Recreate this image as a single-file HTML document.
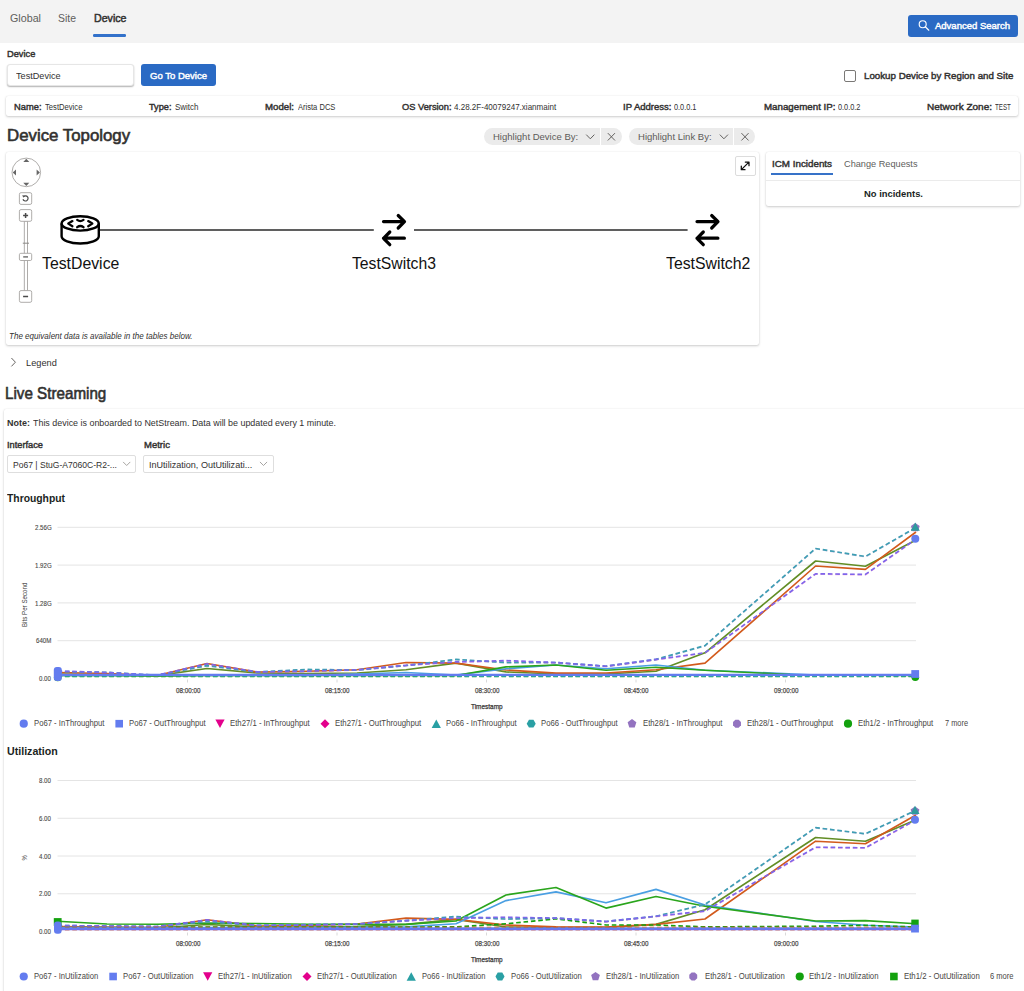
<!DOCTYPE html>
<html lang="en"><head><meta charset="utf-8"><title>Device</title>
<style>
html,body{margin:0;padding:0;background:#fff;}
body{width:1024px;height:991px;position:relative;overflow:hidden;font-family:"Liberation Sans",sans-serif;color:#323130;}
.t{position:absolute;white-space:nowrap;transform-origin:0 50%;}
.r{position:absolute;box-sizing:border-box;}
svg{position:absolute;overflow:visible;}
svg text{font-family:"Liberation Sans",sans-serif;}
</style></head><body>
<div class="r" style="left:0px;top:0px;width:1024px;height:42.7px;background:#f3f3f3;"></div>
<div class="t" style="left:9.70px;top:11.00px;font-size:11px;line-height:15px;color:#605e5c;transform:scaleX(0.9749);">Global</div>
<div class="t" style="left:58.30px;top:11.00px;font-size:11px;line-height:15px;color:#605e5c;transform:scaleX(0.9496);">Site</div>
<div class="t" style="left:93.70px;top:11.00px;font-size:11px;line-height:15px;color:#323130;transform:scaleX(0.9666);-webkit-text-stroke:0.49px #323130;">Device</div>
<div class="r" style="left:93.2px;top:34.2px;width:33.2px;height:2.4px;background:#3271ca;border-radius:1.2px;"></div>
<div class="r" style="left:908px;top:14.6px;width:110.3px;height:22px;background:#2a6ac4;border-radius:3px;"></div>
<svg style="left:0;top:0" width="1024" height="44" viewBox="0 0 1024 44"><circle cx="922.7" cy="24.2" r="3.5" fill="none" stroke="#fff" stroke-width="1.15"/><path d="M925.3 26.8 L928.8 30.2" stroke="#fff" stroke-width="1.2" stroke-linecap="round"/></svg>
<div class="t" style="left:934.50px;top:19.00px;font-size:9.5px;line-height:13px;color:#fff;transform:scaleX(1.0001);-webkit-text-stroke:0.43px #fff;">Advanced Search</div>
<div class="t" style="left:6.70px;top:47.00px;font-size:9.5px;line-height:13px;color:#323130;transform:scaleX(0.9746);-webkit-text-stroke:0.43px #323130;">Device</div>
<div class="r" style="left:6.5px;top:64.3px;width:127px;height:21.6px;background:#fff;border:1px solid #e6e6e6;border-radius:3px;box-shadow:0 1px 1.5px rgba(0,0,0,.3);"></div>
<div class="t" style="left:15.60px;top:69.00px;font-size:9.5px;line-height:13px;color:#323130;transform:scaleX(0.9599);">TestDevice</div>
<div class="r" style="left:141.2px;top:64.4px;width:74.8px;height:21.6px;background:#2a6ac4;border-radius:3px;"></div>
<div class="t" style="left:150.00px;top:69.00px;font-size:9.5px;line-height:13px;color:#fff;transform:scaleX(1.0026);-webkit-text-stroke:0.43px #fff;">Go To Device</div>
<div class="r" style="left:844px;top:70px;width:12px;height:11.8px;background:#fff;border:1px solid #7a7876;border-radius:2px;"></div>
<div class="t" style="left:863.60px;top:69.00px;font-size:9.8px;line-height:14px;color:#323130;transform:scaleX(0.9936);-webkit-text-stroke:0.44px #323130;">Lookup Device by Region and Site</div>
<div class="r" style="left:6px;top:96.2px;width:1012.2px;height:19.5px;background:#fff;border-radius:2px;box-shadow:0 1px 2.5px rgba(0,0,0,.2),0 0 1px rgba(0,0,0,.12);"></div>
<div class="t" style="left:13.70px;top:100.00px;font-size:9.5px;line-height:13px;color:#323130;transform:scaleX(0.9828);-webkit-text-stroke:0.43px #323130;">Name:</div>
<div class="t" style="left:45.00px;top:101.00px;font-size:8.4px;line-height:12px;color:#323130;transform:scaleX(0.9128);">TestDevice</div>
<div class="t" style="left:149.20px;top:100.00px;font-size:9.5px;line-height:13px;color:#323130;transform:scaleX(0.9683);-webkit-text-stroke:0.43px #323130;">Type:</div>
<div class="t" style="left:174.50px;top:101.00px;font-size:8.4px;line-height:12px;color:#323130;transform:scaleX(0.9498);">Switch</div>
<div class="t" style="left:264.50px;top:100.00px;font-size:9.5px;line-height:13px;color:#323130;transform:scaleX(1.0170);-webkit-text-stroke:0.43px #323130;">Model:</div>
<div class="t" style="left:298.00px;top:101.00px;font-size:8.4px;line-height:12px;color:#323130;transform:scaleX(0.9027);">Arista DCS</div>
<div class="t" style="left:401.50px;top:100.00px;font-size:9.5px;line-height:13px;color:#323130;transform:scaleX(0.9765);-webkit-text-stroke:0.43px #323130;">OS Version:</div>
<div class="t" style="left:454.00px;top:101.00px;font-size:8.4px;line-height:12px;color:#323130;transform:scaleX(0.9585);">4.28.2F-40079247.xianmaint</div>
<div class="t" style="left:622.50px;top:100.00px;font-size:9.5px;line-height:13px;color:#323130;transform:scaleX(1.0018);-webkit-text-stroke:0.43px #323130;">IP Address:</div>
<div class="t" style="left:674.00px;top:101.00px;font-size:8.4px;line-height:12px;color:#323130;transform:scaleX(0.8759);">0.0.0.1</div>
<div class="t" style="left:763.50px;top:100.00px;font-size:9.5px;line-height:13px;color:#323130;transform:scaleX(1.0257);-webkit-text-stroke:0.43px #323130;">Management IP:</div>
<div class="t" style="left:838.00px;top:101.00px;font-size:8.4px;line-height:12px;color:#323130;transform:scaleX(0.8759);">0.0.0.2</div>
<div class="t" style="left:927.00px;top:100.00px;font-size:9.5px;line-height:13px;color:#323130;transform:scaleX(1.0522);-webkit-text-stroke:0.43px #323130;">Network Zone:</div>
<div class="t" style="left:995.10px;top:101.00px;font-size:8.4px;line-height:12px;color:#323130;transform:scaleX(0.7406);">TEST</div>
<div class="t" style="left:7.00px;top:124.00px;font-size:16.4px;line-height:23px;color:#323130;transform:scaleX(1.0263);-webkit-text-stroke:0.60px #323130;">Device Topology</div>
<div class="r" style="left:484px;top:128.2px;width:115.79999999999998px;height:16.8px;background:#ebebeb;border-radius:8.4px 0 0 8.4px;"></div>
<div class="r" style="left:601.1999999999999px;top:128.2px;width:20.400000000000045px;height:16.8px;background:#ebebeb;border-radius:0 8.4px 8.4px 0;"></div>
<div class="t" style="left:492.60px;top:130.00px;font-size:9.8px;line-height:14px;color:#5d5b59;transform:scaleX(0.9716);">Highlight Device By:</div>
<svg style="left:0;top:0" width="1024" height="150" viewBox="0 0 1024 150"><g fill="none" stroke="#5d5b59" stroke-width="0.95" stroke-linecap="round" stroke-linejoin="round"><path d="M586.5 134.9l3.8 3.9l3.8-3.9"/><path d="M608.1 133.4l6.6 6.8M614.7 133.4l-6.6 6.8"/></g></svg>
<div class="r" style="left:629.1px;top:128.2px;width:103.69999999999996px;height:16.8px;background:#ebebeb;border-radius:8.4px 0 0 8.4px;"></div>
<div class="r" style="left:734.1999999999999px;top:128.2px;width:20.500000000000068px;height:16.8px;background:#ebebeb;border-radius:0 8.4px 8.4px 0;"></div>
<div class="t" style="left:637.50px;top:130.00px;font-size:9.8px;line-height:14px;color:#5d5b59;transform:scaleX(0.9720);">Highlight Link By:</div>
<svg style="left:0;top:0" width="1024" height="150" viewBox="0 0 1024 150"><g fill="none" stroke="#5d5b59" stroke-width="0.95" stroke-linecap="round" stroke-linejoin="round"><path d="M720.1 134.9l3.8 3.9l3.8-3.9"/><path d="M741.7 133.4l6.6 6.8M748.3000000000001 133.4l-6.6 6.8"/></g></svg>
<div class="r" style="left:6.2px;top:151.6px;width:753px;height:193.3px;background:#fff;border-radius:2px;box-shadow:0 1px 2.5px rgba(0,0,0,.2),0 0 1px rgba(0,0,0,.12);"></div>
<div class="r" style="left:734.8px;top:155.6px;width:20.8px;height:20.7px;background:#fff;border:1px solid #dcdcdc;border-radius:2px;"></div>
<svg style="left:0;top:0" width="1024" height="200" viewBox="0 0 1024 200"><g fill="none" stroke="#111" stroke-width="1.25" stroke-linecap="round" stroke-linejoin="round"><path d="M741.4 169.6L748.9 162.1M745.3 162H749V165.7M741.3 166V169.7H745"/></g></svg>
<div class="r" style="left:766px;top:151.6px;width:253.5px;height:54.2px;background:#fff;border-radius:2px;box-shadow:0 1px 2.5px rgba(0,0,0,.2),0 0 1px rgba(0,0,0,.12);"></div>
<div class="t" style="left:772.20px;top:157.00px;font-size:9.8px;line-height:14px;color:#323130;transform:scaleX(1.0015);-webkit-text-stroke:0.44px #323130;">ICM Incidents</div>
<div class="t" style="left:844.00px;top:157.00px;font-size:9.8px;line-height:14px;color:#605e5c;transform:scaleX(0.9369);">Change Requests</div>
<div class="r" style="left:771px;top:173.2px;width:62px;height:1.6px;background:#3672c8;"></div>
<div class="r" style="left:766px;top:179.8px;width:253.5px;height:0.8px;background:#ebebeb;"></div>
<div class="t" style="left:863.50px;top:187.00px;font-size:9.8px;line-height:14px;color:#201f1e;transform:scaleX(0.9589);font-weight:700;">No incidents.</div>
<svg style="left:0;top:0" width="60" height="320" viewBox="0 0 60 320"><circle cx="26.3" cy="172.4" r="14.3" fill="#fff" stroke="#a6a4a2" stroke-width="0.9"/><g fill="#666"><path d="M26.3 158.7l3 3.4h-6z"/><path d="M26.3 186.1l3-3.4h-6z"/><path d="M12.7 172.4l3.3-3v6z"/><path d="M39.9 172.4l-3.3-3v6z"/></g><g fill="#fff" stroke="#a6a4a2" stroke-width="0.9"><rect x="24.3" y="221" width="3.2" height="70"/><rect x="19.4" y="192.7" width="12.3" height="11.7" rx="1.6"/><rect x="19.4" y="209.6" width="12.3" height="11.7" rx="1.6"/><rect x="19.4" y="290.6" width="12.3" height="11.7" rx="1.6"/><rect x="19.4" y="253.3" width="12.3" height="7.2" rx="1.4"/></g><g stroke="#4a4a4a" stroke-width="1.5" fill="none"><path d="M22.8 243.2h6.2" stroke="#8a8886" stroke-width="1"/><path d="M23.1 215.5h5M25.6 213v5"/><path d="M23.1 296.5h5"/><path d="M23.2 256.9h4.8" stroke="#6a6a6a" stroke-width="1.4"/><path d="M23.6 196.6a2.6 2.6 0 1 1 -0.6 2.6" stroke-width="1.2"/></g><path d="M22.2 195.3l2.6 0.2l-1.4 2.2z" fill="#555"/></svg>
<svg style="left:0;top:0" width="1024" height="400" viewBox="0 0 1024 400"><g fill="none" stroke="#2b2b2b" stroke-width="1.7"><path d="M99.6 230H373.8M414 230H687.6"/></g><g fill="none" stroke="#000" stroke-width="3.2" stroke-linecap="round" stroke-linejoin="round"><path d="M383.5 221.6H404.4M398.2 215.5L404.5 221.7L398.2 228M404.4 238.2H383.5M389.8 232L383.5 238.3L389.8 244.7"/><path d="M697.0 221.6H717.9M711.7 215.5L718.0 221.7L711.7 228M717.9 238.2H697.0M703.3 232L697.0 238.3L703.3 244.7"/></g><g fill="none" stroke="#000" stroke-width="2.4" stroke-linejoin="round"><ellipse cx="80.2" cy="223.4" rx="18.6" ry="7.2"/><path d="M61.6 223.4V236.3A18.6 7.2 0 0 0 98.8 236.3V223.4"/></g><g fill="none" stroke="#000" stroke-width="2.3" stroke-linecap="round" stroke-linejoin="round"><path d="M72.4 221.1L68.3 223.6L72.4 226.2M88.2 221.1L92.3 223.6L88.2 226.2M77.2 219.9Q80.3 222.3 83.5 219.9M77.2 227.2Q80.3 224.8 83.5 227.2"/></g></svg>
<div class="t" style="left:41.90px;top:253.00px;font-size:15.7px;line-height:22px;color:#111;transform:scaleX(1.0080);">TestDevice</div>
<div class="t" style="left:352.20px;top:253.00px;font-size:15.7px;line-height:22px;color:#111;transform:scaleX(1.0028);">TestSwitch3</div>
<div class="t" style="left:665.60px;top:253.00px;font-size:15.7px;line-height:22px;color:#111;transform:scaleX(1.0075);">TestSwitch2</div>
<div class="t" style="left:9.40px;top:330.00px;font-size:8.5px;line-height:12px;color:#323130;transform:scaleX(0.9476);font-style:italic;">The equivalent data is available in the tables below.</div>
<div class="t" style="left:26.00px;top:356.00px;font-size:9.6px;line-height:13px;color:#323130;transform:scaleX(0.9614);">Legend</div>
<svg style="left:0;top:0" width="40" height="400" viewBox="0 0 40 400"><path d="M11.7 358.3l3.7 3.9l-3.7 3.9" fill="none" stroke="#5d5b59" stroke-width="0.95" stroke-linecap="round" stroke-linejoin="round"/></svg>
<div class="t" style="left:5.10px;top:382.00px;font-size:16.5px;line-height:23px;color:#323130;transform:scaleX(0.9204);-webkit-text-stroke:0.60px #323130;">Live Streaming</div>
<div class="r" style="left:3.8px;top:408.6px;width:1030px;height:600px;background:#fff;border-radius:2px;box-shadow:0 1px 2.5px rgba(0,0,0,.2),0 0 1px rgba(0,0,0,.12);"></div>
<div class="t" style="left:6.80px;top:416.00px;font-size:9.5px;line-height:13px;color:#323130;transform:scaleX(0.9433);font-weight:700;">Note:</div>
<div class="t" style="left:32.80px;top:416.00px;font-size:9.5px;line-height:13px;color:#323130;transform:scaleX(0.9376);">This device is onboarded to NetStream. Data will be updated every 1 minute.</div>
<div class="t" style="left:6.80px;top:438.00px;font-size:9.6px;line-height:13px;color:#323130;transform:scaleX(0.9637);-webkit-text-stroke:0.43px #323130;">Interface</div>
<div class="t" style="left:143.70px;top:438.00px;font-size:9.6px;line-height:13px;color:#323130;transform:scaleX(0.9911);-webkit-text-stroke:0.43px #323130;">Metric</div>
<div class="r" style="left:6.7px;top:454.8px;width:129.6px;height:18.6px;background:#fff;border:1px solid #dedede;border-radius:2px;"></div>
<div class="r" style="left:143.3px;top:454.8px;width:130.3px;height:18.6px;background:#fff;border:1px solid #dedede;border-radius:2px;"></div>
<div class="t" style="left:12.70px;top:458.00px;font-size:9.7px;line-height:14px;color:#323130;transform:scaleX(0.8830);">Po67 | StuG-A7060C-R2-...</div>
<div class="t" style="left:149.10px;top:458.00px;font-size:9.7px;line-height:14px;color:#323130;transform:scaleX(0.9357);">InUtilization, OutUtilizati...</div>
<svg style="left:0;top:0" width="300" height="480" viewBox="0 0 300 480"><g fill="none" stroke="#a19f9d" stroke-width="0.95" stroke-linecap="round" stroke-linejoin="round"><path d="M123.4 462.2l3.3 3.3l3.3-3.3M260.2 462.2l3.3 3.3l3.3-3.3"/></g></svg>
<div class="t" style="left:7.40px;top:491.00px;font-size:11px;line-height:15px;color:#201f1e;transform:scaleX(0.9400);font-weight:700;">Throughput</div>
<div class="t" style="left:7.00px;top:744.00px;font-size:11px;line-height:15px;color:#201f1e;transform:scaleX(0.9667);font-weight:700;">Utilization</div>
<svg style="left:0;top:0" width="1024" height="991" viewBox="0 0 1024 991">
<line x1="57.5" x2="916" y1="527.30" y2="527.30" stroke="#e4e4e4" stroke-width="1"/>
<line x1="57.5" x2="916" y1="565.10" y2="565.10" stroke="#e4e4e4" stroke-width="1"/>
<line x1="57.5" x2="916" y1="602.90" y2="602.90" stroke="#e4e4e4" stroke-width="1"/>
<line x1="57.5" x2="916" y1="640.70" y2="640.70" stroke="#e4e4e4" stroke-width="1"/>
<line x1="187.5" x2="187.5" y1="679.5" y2="682.5" stroke="#d0d0d0" stroke-width="0.8"/>
<line x1="337" x2="337" y1="679.5" y2="682.5" stroke="#d0d0d0" stroke-width="0.8"/>
<line x1="486.5" x2="486.5" y1="679.5" y2="682.5" stroke="#d0d0d0" stroke-width="0.8"/>
<line x1="636" x2="636" y1="679.5" y2="682.5" stroke="#d0d0d0" stroke-width="0.8"/>
<line x1="785.5" x2="785.5" y1="679.5" y2="682.5" stroke="#d0d0d0" stroke-width="0.8"/>
<polyline points="57.5,676.5 107.0,676.5 157.0,676.5 207.0,676.5 257.0,676.5 307.0,676.5 357.0,676.5 406.0,676.5 456.0,676.5 506.0,676.5 556.0,676.5 606.0,676.5 656.0,676.5 705.0,676.5 815.6,676.5 865.4,676.5 916.0,676.5" fill="none" stroke="#1e9a2a" stroke-width="1.3" stroke-linejoin="round" stroke-dasharray="4.6 2.8"/>
<polyline points="57.5,676.2 107.0,676.2 157.0,676.2 207.0,676.2 257.0,676.2 307.0,676.2 357.0,676.2 406.0,676.2 456.0,676.2 506.0,676.2 556.0,676.2 606.0,676.2 656.0,676.2 705.0,676.2 815.6,676.2 865.4,676.2 916.0,676.2" fill="none" stroke="#2aa0a4" stroke-width="1.4" stroke-linejoin="round" stroke-dasharray="4.6 2.8"/>
<polyline points="57.5,671.4 107.0,672.9 157.0,675.6 207.0,664.1 257.0,672.2 307.0,671.6 357.0,670.1 406.0,665.6 456.0,662.2 506.0,661.0 556.0,662.9 606.0,666.6 656.0,659.8 705.0,653.1 815.6,574.1 865.4,574.8 916.0,539.4" fill="none" stroke="#e3008c" stroke-width="1.65" stroke-linejoin="round" stroke-dasharray="4.6 2.8" opacity="0.3"/>
<polyline points="57.5,674.0 107.0,674.5 157.0,675.6 207.0,668.5 257.0,673.0 307.0,673.5 357.0,673.0 406.0,669.8 456.0,663.1 506.0,671.9 556.0,674.0 606.0,674.0 656.0,671.2 705.0,652.8 815.6,561.0 865.4,566.2 916.0,540.0" fill="none" stroke="#628d25" stroke-width="1.65" stroke-linejoin="round"/>
<polyline points="57.5,672.5 107.0,673.5 157.0,675.5 207.0,663.5 257.0,672.0 307.0,671.2 357.0,669.8 406.0,662.5 456.0,663.1 506.0,670.0 556.0,673.1 606.0,673.0 656.0,669.8 705.0,663.1 815.6,566.0 865.4,569.4 916.0,532.0" fill="none" stroke="#d25a1c" stroke-width="1.65" stroke-linejoin="round"/>
<polyline points="57.5,675.5 107.0,675.5 157.0,676.0 207.0,675.5 257.0,675.5 307.0,675.5 357.0,674.0 406.0,672.5 456.0,675.0 506.0,668.8 556.0,665.0 606.0,668.8 656.0,665.0 705.0,670.2 815.6,675.0 865.4,675.0 916.0,675.0" fill="none" stroke="#4a9fe2" stroke-width="1.65" stroke-linejoin="round"/>
<polyline points="57.5,675.5 107.0,675.5 157.0,675.8 207.0,675.5 257.0,675.5 307.0,675.5 357.0,675.5 406.0,675.5 456.0,675.5 506.0,666.9 556.0,665.0 606.0,670.2 656.0,667.2 705.0,670.2 790.0,674.6 865.4,675.2 916.0,675.5" fill="none" stroke="#2aa51c" stroke-width="1.65" stroke-linejoin="round"/>
<polyline points="57.5,671.8 107.0,672.6 157.0,675.6 207.0,665.9 257.0,672.3 307.0,669.7 357.0,670.3 406.0,665.8 456.0,659.7 506.0,662.8 556.0,662.8 606.0,666.5 656.0,659.7 705.0,645.9 815.6,548.8 865.4,556.8 916.0,527.8" fill="none" stroke="#9373c0" stroke-width="1.65" stroke-linejoin="round" stroke-dasharray="4.6 2.8" opacity="0.45"/>
<polyline points="57.5,671.5 107.0,672.3 157.0,675.3 207.0,665.6 257.0,672.0 307.0,669.4 357.0,670.0 406.0,665.5 456.0,659.4 506.0,662.5 556.0,662.5 606.0,666.2 656.0,659.4 705.0,645.6 815.6,548.5 865.4,556.5 916.0,527.5" fill="none" stroke="#3d9fb3" stroke-width="1.65" stroke-linejoin="round" stroke-dasharray="4.6 2.8"/>
<polyline points="57.5,671.0 107.0,672.5 157.0,675.3 207.0,663.8 257.0,671.9 307.0,671.2 357.0,669.8 406.0,665.2 456.0,661.9 506.0,660.6 556.0,662.5 606.0,666.2 656.0,659.4 705.0,652.8 815.6,573.8 865.4,574.4 916.0,539.0" fill="none" stroke="#7d66ec" stroke-width="1.65" stroke-linejoin="round" stroke-dasharray="4.6 2.8"/>
<polyline points="57.5,674.8 107.0,674.8 157.0,674.8 207.0,674.8 257.0,674.8 307.0,674.8 357.0,674.8 406.0,674.8 456.0,674.8 506.0,674.8 556.0,674.8 606.0,674.8 656.0,674.8 705.0,674.8 815.6,674.8 865.4,674.8 916.0,674.8" fill="none" stroke="#637cef" stroke-width="2.2" stroke-linejoin="round"/>
<circle cx="57.7" cy="677.5" r="3.8" fill="#13a10e"/>
<rect x="53.8" y="667" width="8" height="14" rx="3" fill="#637cef"/>
<circle cx="915.3" cy="677.3" r="3.8" fill="#13a10e"/>
<rect x="911.3000000000001" y="670.1" width="7.8" height="7.8" fill="#637cef"/>
<polygon points="915.30,522.88 919.69,526.07 918.02,531.24 912.58,531.24 910.91,526.07" fill="#9373c0"/>
<path d="M915.3 522.5L919.81 530.7H910.79Z" fill="#2f9a9e"/>
<circle cx="915.3" cy="538.7" r="4.0" fill="#637cef"/>
<circle cx="23.75" cy="723.7" r="4.1" fill="#637cef"/>
<rect x="115.4" y="719.9000000000001" width="7.6" height="7.6" fill="#637cef"/>
<path d="M220 727.9000000000001L224.62 719.5H215.38Z" fill="#e3008c"/>
<path d="M325 719.19L329.51 723.7L325 728.21L320.49 723.7Z" fill="#e3008c"/>
<path d="M436.3 719.5L440.92 727.9000000000001H431.68Z" fill="#2aa0a4"/>
<polygon points="535.71,723.70 533.46,727.61 528.95,727.61 526.69,723.70 528.95,719.79 533.46,719.79" fill="#2aa0a4"/>
<polygon points="632.00,719.08 636.39,722.27 634.72,727.44 629.28,727.44 627.61,722.27" fill="#9373c0"/>
<polygon points="740.96,725.34 738.64,727.66 735.36,727.66 733.04,725.34 733.04,722.06 735.36,719.74 738.64,719.74 740.96,722.06" fill="#9373c0"/>
<circle cx="848" cy="723.7" r="4.1" fill="#13a10e"/>
</svg>
<div class="t" style="left:34.62px;top:522.00px;font-size:7.9px;line-height:11px;color:#484644;transform:scaleX(0.7750);-webkit-text-stroke:0.12px #484644;">2.56G</div>
<div class="t" style="left:34.62px;top:560.00px;font-size:7.9px;line-height:11px;color:#484644;transform:scaleX(0.7750);-webkit-text-stroke:0.12px #484644;">1.92G</div>
<div class="t" style="left:34.62px;top:598.00px;font-size:7.9px;line-height:11px;color:#484644;transform:scaleX(0.7750);-webkit-text-stroke:0.12px #484644;">1.28G</div>
<div class="t" style="left:35.98px;top:635.00px;font-size:7.9px;line-height:11px;color:#484644;transform:scaleX(0.7750);-webkit-text-stroke:0.12px #484644;">640M</div>
<div class="t" style="left:39.38px;top:673.00px;font-size:7.9px;line-height:11px;color:#484644;transform:scaleX(0.7750);-webkit-text-stroke:0.12px #484644;">0.00</div>
<div class="t" style="left:175.80px;top:685.00px;font-size:7.6px;line-height:11px;color:#484644;transform:scaleX(0.8248);-webkit-text-stroke:0.25px #484644;">08:00:00</div>
<div class="t" style="left:325.10px;top:685.00px;font-size:7.6px;line-height:11px;color:#484644;transform:scaleX(0.8248);-webkit-text-stroke:0.25px #484644;">08:15:00</div>
<div class="t" style="left:474.60px;top:685.00px;font-size:7.6px;line-height:11px;color:#484644;transform:scaleX(0.8248);-webkit-text-stroke:0.25px #484644;">08:30:00</div>
<div class="t" style="left:624.10px;top:685.00px;font-size:7.6px;line-height:11px;color:#484644;transform:scaleX(0.8248);-webkit-text-stroke:0.25px #484644;">08:45:00</div>
<div class="t" style="left:773.80px;top:685.00px;font-size:7.6px;line-height:11px;color:#484644;transform:scaleX(0.8248);-webkit-text-stroke:0.25px #484644;">09:00:00</div>
<div class="t" style="left:470.60px;top:701.00px;font-size:7.6px;line-height:11px;color:#323130;transform:scaleX(0.8471);-webkit-text-stroke:0.25px #323130;">Timestamp</div>
<div class="t" style="left:33.75px;top:717.00px;font-size:8.5px;line-height:12px;color:#484644;transform:scaleX(0.9042);">Po67 - InThroughput</div>
<div class="t" style="left:128.75px;top:717.00px;font-size:8.5px;line-height:12px;color:#484644;transform:scaleX(0.9074);">Po67 - OutThroughput</div>
<div class="t" style="left:230.25px;top:717.00px;font-size:8.5px;line-height:12px;color:#484644;transform:scaleX(0.9122);">Eth27/1 - InThroughput</div>
<div class="t" style="left:335.00px;top:717.00px;font-size:8.5px;line-height:12px;color:#484644;transform:scaleX(0.9172);">Eth27/1 - OutThroughput</div>
<div class="t" style="left:445.50px;top:717.00px;font-size:8.5px;line-height:12px;color:#484644;transform:scaleX(0.9074);">Po66 - InThroughput</div>
<div class="t" style="left:540.75px;top:717.00px;font-size:8.5px;line-height:12px;color:#484644;transform:scaleX(0.9074);">Po66 - OutThroughput</div>
<div class="t" style="left:642.50px;top:717.00px;font-size:8.5px;line-height:12px;color:#484644;transform:scaleX(0.9094);">Eth28/1 - InThroughput</div>
<div class="t" style="left:746.75px;top:717.00px;font-size:8.5px;line-height:12px;color:#484644;transform:scaleX(0.9172);">Eth28/1 - OutThroughput</div>
<div class="t" style="left:858.00px;top:717.00px;font-size:8.5px;line-height:12px;color:#484644;transform:scaleX(0.9100);">Eth1/2 - InThroughput</div>
<div class="t" style="left:944.50px;top:717.00px;font-size:8.5px;line-height:12px;color:#484644;transform:scaleX(0.8694);">7 more</div>
<svg style="left:0;top:0" width="60" height="991" viewBox="0 0 60 991"><text x="0" y="0" transform="translate(27.11 604.8) rotate(-90)" text-anchor="middle" font-size="6.7" fill="#3b3a39" textLength="44.5" lengthAdjust="spacingAndGlyphs">Bits Per Second</text></svg>
<svg style="left:0;top:0" width="1024" height="991" viewBox="0 0 1024 991">
<line x1="57.5" x2="916" y1="780.50" y2="780.50" stroke="#e4e4e4" stroke-width="1"/>
<line x1="57.5" x2="916" y1="818.25" y2="818.25" stroke="#e4e4e4" stroke-width="1"/>
<line x1="57.5" x2="916" y1="856.00" y2="856.00" stroke="#e4e4e4" stroke-width="1"/>
<line x1="57.5" x2="916" y1="893.75" y2="893.75" stroke="#e4e4e4" stroke-width="1"/>
<line x1="187.5" x2="187.5" y1="932.5" y2="935.5" stroke="#d0d0d0" stroke-width="0.8"/>
<line x1="337" x2="337" y1="932.5" y2="935.5" stroke="#d0d0d0" stroke-width="0.8"/>
<line x1="486.5" x2="486.5" y1="932.5" y2="935.5" stroke="#d0d0d0" stroke-width="0.8"/>
<line x1="636" x2="636" y1="932.5" y2="935.5" stroke="#d0d0d0" stroke-width="0.8"/>
<line x1="785.5" x2="785.5" y1="932.5" y2="935.5" stroke="#d0d0d0" stroke-width="0.8"/>
<polyline points="57.5,929.9 107.0,929.9 157.0,929.9 207.0,929.9 257.0,929.9 307.0,929.9 357.0,929.9 406.0,929.9 456.0,929.9 506.0,929.9 556.0,929.9 606.0,929.9 656.0,929.9 705.0,929.9 815.6,929.9 865.4,929.9 916.0,929.9" fill="none" stroke="#d25a1c" stroke-width="1.4" stroke-linejoin="round" stroke-dasharray="4.6 2.8" opacity="0.75"/>
<polyline points="57.5,929.5 107.0,929.5 157.0,929.5 207.0,929.5 257.0,929.5 307.0,929.5 357.0,929.5 406.0,929.5 456.0,929.5 506.0,929.5 556.0,929.5 606.0,929.5 656.0,929.5 705.0,929.5 815.6,929.5 865.4,929.5 916.0,929.5" fill="none" stroke="#7d66ec" stroke-width="1.5" stroke-linejoin="round"/>
<polyline points="57.5,925.9 107.0,926.4 157.0,926.9 207.0,920.2 257.0,925.6 307.0,925.4 357.0,924.4 406.0,921.0 456.0,918.5 506.0,917.6 556.0,918.5 606.0,921.9 656.0,916.6 705.0,911.4 815.6,847.6 865.4,848.1 916.0,820.1" fill="none" stroke="#e3008c" stroke-width="1.65" stroke-linejoin="round" stroke-dasharray="4.6 2.8" opacity="0.3"/>
<polyline points="57.5,927.5 107.0,927.5 157.0,928.0 207.0,924.5 257.0,927.0 307.0,927.0 357.0,926.5 406.0,924.4 456.0,919.4 506.0,927.0 556.0,927.5 606.0,927.5 656.0,924.4 705.0,909.8 815.6,837.5 865.4,841.2 916.0,819.7" fill="none" stroke="#628d25" stroke-width="1.65" stroke-linejoin="round"/>
<polyline points="57.5,926.5 107.0,927.0 157.0,927.5 207.0,919.8 257.0,926.0 307.0,925.5 357.0,924.0 406.0,918.1 456.0,919.4 506.0,925.0 556.0,926.9 606.0,927.0 656.0,924.4 705.0,919.0 815.6,841.2 865.4,843.7 916.0,815.0" fill="none" stroke="#d25a1c" stroke-width="1.65" stroke-linejoin="round"/>
<polyline points="57.5,927.5 107.0,927.5 157.0,927.5 207.0,927.5 257.0,927.5 307.0,927.5 357.0,927.2 406.0,926.9 456.0,923.8 506.0,900.6 556.0,891.9 606.0,902.8 656.0,889.4 705.0,905.0 815.6,921.5 865.4,925.3 916.0,927.0" fill="none" stroke="#4a9fe2" stroke-width="1.65" stroke-linejoin="round"/>
<polyline points="57.5,921.2 107.0,924.0 157.0,924.2 207.0,923.1 257.0,923.5 307.0,924.3 357.0,924.4 406.0,924.4 456.0,921.0 506.0,895.0 556.0,887.5 606.0,908.1 656.0,896.5 705.0,906.2 815.6,921.0 865.4,920.6 916.0,923.8" fill="none" stroke="#2aa51c" stroke-width="1.65" stroke-linejoin="round"/>
<polyline points="57.5,926.5 107.0,926.8 157.0,927.0 207.0,927.0 257.0,927.0 307.0,927.0 357.0,927.0 406.0,927.0 456.0,926.9 506.0,923.8 556.0,918.8 606.0,925.0 656.0,925.0 705.0,926.9 815.6,926.2 865.4,925.3 916.0,927.0" fill="none" stroke="#13a10e" stroke-width="1.65" stroke-linejoin="round" stroke-dasharray="4.6 2.8"/>
<polyline points="57.5,925.8 107.0,926.3 157.0,926.8 207.0,921.8 257.0,925.8 307.0,924.8 357.0,924.3 406.0,920.9 456.0,916.8 506.0,919.3 556.0,918.4 606.0,921.8 656.0,916.5 705.0,904.7 815.6,827.9 865.4,834.0 916.0,810.6" fill="none" stroke="#9373c0" stroke-width="1.65" stroke-linejoin="round" stroke-dasharray="4.6 2.8" opacity="0.45"/>
<polyline points="57.5,925.5 107.0,926.0 157.0,926.5 207.0,921.5 257.0,925.5 307.0,924.5 357.0,924.0 406.0,920.6 456.0,916.5 506.0,919.0 556.0,918.1 606.0,921.5 656.0,916.2 705.0,904.4 815.6,827.6 865.4,833.8 916.0,810.3" fill="none" stroke="#3d9fb3" stroke-width="1.65" stroke-linejoin="round" stroke-dasharray="4.6 2.8"/>
<polyline points="57.5,925.5 107.0,926.0 157.0,926.5 207.0,919.9 257.0,925.3 307.0,925.0 357.0,924.0 406.0,920.6 456.0,918.1 506.0,917.2 556.0,918.1 606.0,921.5 656.0,916.2 705.0,911.0 815.6,847.2 865.4,847.8 916.0,819.7" fill="none" stroke="#7d66ec" stroke-width="1.65" stroke-linejoin="round" stroke-dasharray="4.6 2.8"/>
<polyline points="57.5,928.4 107.0,928.4 157.0,928.4 207.0,928.4 257.0,928.4 307.0,928.4 357.0,928.4 406.0,928.4 456.0,928.4 506.0,928.4 556.0,928.4 606.0,928.4 656.0,928.4 705.0,928.4 815.6,928.4 865.4,928.4 916.0,928.4" fill="none" stroke="#637cef" stroke-width="2.3" stroke-linejoin="round"/>
<polyline points="57.5,927.1 107.0,927.1 157.0,927.1 207.0,927.1 257.0,927.1 307.0,927.1 357.0,927.1 406.0,927.1 456.0,927.1 506.0,927.1 556.0,927.1 606.0,927.1 656.0,927.1 705.0,927.1 815.6,927.1 865.4,927.1 916.0,927.1" fill="none" stroke="#d25a1c" stroke-width="0.9" stroke-linejoin="round" stroke-dasharray="4.6 2.8" opacity="0.8"/>
<rect x="53.800000000000004" y="918.1" width="7.8" height="7.8" fill="#13a10e"/>
<rect x="54" y="921.5" width="7.6" height="12.3" rx="3" fill="#637cef"/>
<rect x="911.3" y="919.5999999999999" width="7.4" height="7.4" fill="#13a10e"/>
<rect x="911.1" y="924.7" width="7.8" height="7.8" fill="#637cef"/>
<polygon points="915.00,806.38 919.39,809.57 917.72,814.74 912.28,814.74 910.61,809.57" fill="#9373c0"/>
<path d="M915 805.8L919.51 814.0H910.49Z" fill="#2f9a9e"/>
<circle cx="915" cy="819.7" r="4.0" fill="#637cef"/>
<circle cx="23.75" cy="976.5" r="4.1" fill="#637cef"/>
<rect x="109.3" y="972.7" width="7.6" height="7.6" fill="#637cef"/>
<path d="M207.7 980.7L212.32 972.3H203.07999999999998Z" fill="#e3008c"/>
<path d="M307 971.99L311.51 976.5L307 981.01L302.49 976.5Z" fill="#e3008c"/>
<path d="M411.25 972.3L415.87 980.7H406.63Z" fill="#2aa0a4"/>
<polygon points="504.51,976.50 502.25,980.41 497.75,980.41 495.49,976.50 497.75,972.59 502.25,972.59" fill="#2aa0a4"/>
<polygon points="595.50,971.88 599.89,975.07 598.22,980.24 592.78,980.24 591.11,975.07" fill="#9373c0"/>
<polygon points="697.21,978.14 694.89,980.46 691.61,980.46 689.29,978.14 689.29,974.86 691.61,972.54 694.89,972.54 697.21,974.86" fill="#9373c0"/>
<circle cx="799.75" cy="976.5" r="4.1" fill="#13a10e"/>
<rect x="890.1" y="972.7" width="7.6" height="7.6" fill="#13a10e"/>
</svg>
<div class="t" style="left:39.38px;top:775.00px;font-size:7.9px;line-height:11px;color:#484644;transform:scaleX(0.7750);-webkit-text-stroke:0.12px #484644;">8.00</div>
<div class="t" style="left:39.38px;top:813.00px;font-size:7.9px;line-height:11px;color:#484644;transform:scaleX(0.7750);-webkit-text-stroke:0.12px #484644;">6.00</div>
<div class="t" style="left:39.38px;top:851.00px;font-size:7.9px;line-height:11px;color:#484644;transform:scaleX(0.7750);-webkit-text-stroke:0.12px #484644;">4.00</div>
<div class="t" style="left:39.38px;top:888.00px;font-size:7.9px;line-height:11px;color:#484644;transform:scaleX(0.7750);-webkit-text-stroke:0.12px #484644;">2.00</div>
<div class="t" style="left:39.38px;top:926.00px;font-size:7.9px;line-height:11px;color:#484644;transform:scaleX(0.7750);-webkit-text-stroke:0.12px #484644;">0.00</div>
<div class="t" style="left:175.80px;top:938.00px;font-size:7.6px;line-height:11px;color:#484644;transform:scaleX(0.8248);-webkit-text-stroke:0.25px #484644;">08:00:00</div>
<div class="t" style="left:325.10px;top:938.00px;font-size:7.6px;line-height:11px;color:#484644;transform:scaleX(0.8248);-webkit-text-stroke:0.25px #484644;">08:15:00</div>
<div class="t" style="left:474.60px;top:938.00px;font-size:7.6px;line-height:11px;color:#484644;transform:scaleX(0.8248);-webkit-text-stroke:0.25px #484644;">08:30:00</div>
<div class="t" style="left:624.10px;top:938.00px;font-size:7.6px;line-height:11px;color:#484644;transform:scaleX(0.8248);-webkit-text-stroke:0.25px #484644;">08:45:00</div>
<div class="t" style="left:773.80px;top:938.00px;font-size:7.6px;line-height:11px;color:#484644;transform:scaleX(0.8248);-webkit-text-stroke:0.25px #484644;">09:00:00</div>
<div class="t" style="left:470.60px;top:954.00px;font-size:7.6px;line-height:11px;color:#323130;transform:scaleX(0.8471);-webkit-text-stroke:0.25px #323130;">Timestamp</div>
<div class="t" style="left:33.75px;top:970.00px;font-size:8.5px;line-height:12px;color:#484644;transform:scaleX(0.9006);">Po67 - InUtilization</div>
<div class="t" style="left:122.50px;top:970.00px;font-size:8.5px;line-height:12px;color:#484644;transform:scaleX(0.9044);">Po67 - OutUtilization</div>
<div class="t" style="left:218.25px;top:970.00px;font-size:8.5px;line-height:12px;color:#484644;transform:scaleX(0.9128);">Eth27/1 - InUtilization</div>
<div class="t" style="left:317.00px;top:970.00px;font-size:8.5px;line-height:12px;color:#484644;transform:scaleX(0.9124);">Eth27/1 - OutUtilization</div>
<div class="t" style="left:422.00px;top:970.00px;font-size:8.5px;line-height:12px;color:#484644;transform:scaleX(0.8901);">Po66 - InUtilization</div>
<div class="t" style="left:510.50px;top:970.00px;font-size:8.5px;line-height:12px;color:#484644;transform:scaleX(0.9076);">Po66 - OutUtilization</div>
<div class="t" style="left:606.25px;top:970.00px;font-size:8.5px;line-height:12px;color:#484644;transform:scaleX(0.9066);">Eth28/1 - InUtilization</div>
<div class="t" style="left:704.50px;top:970.00px;font-size:8.5px;line-height:12px;color:#484644;transform:scaleX(0.9124);">Eth28/1 - OutUtilization</div>
<div class="t" style="left:809.25px;top:970.00px;font-size:8.5px;line-height:12px;color:#484644;transform:scaleX(0.9137);">Eth1/2 - InUtilization</div>
<div class="t" style="left:903.50px;top:970.00px;font-size:8.5px;line-height:12px;color:#484644;transform:scaleX(0.9162);">Eth1/2 - OutUtilization</div>
<div class="t" style="left:990.00px;top:970.00px;font-size:8.5px;line-height:12px;color:#484644;transform:scaleX(0.8883);">6 more</div>
<svg style="left:0;top:0" width="60" height="991" viewBox="0 0 60 991"><text x="0" y="0" transform="translate(27.11 858) rotate(-90)" text-anchor="middle" font-size="6.7" fill="#3b3a39" textLength="5.2" lengthAdjust="spacingAndGlyphs">%</text></svg>
</body></html>
